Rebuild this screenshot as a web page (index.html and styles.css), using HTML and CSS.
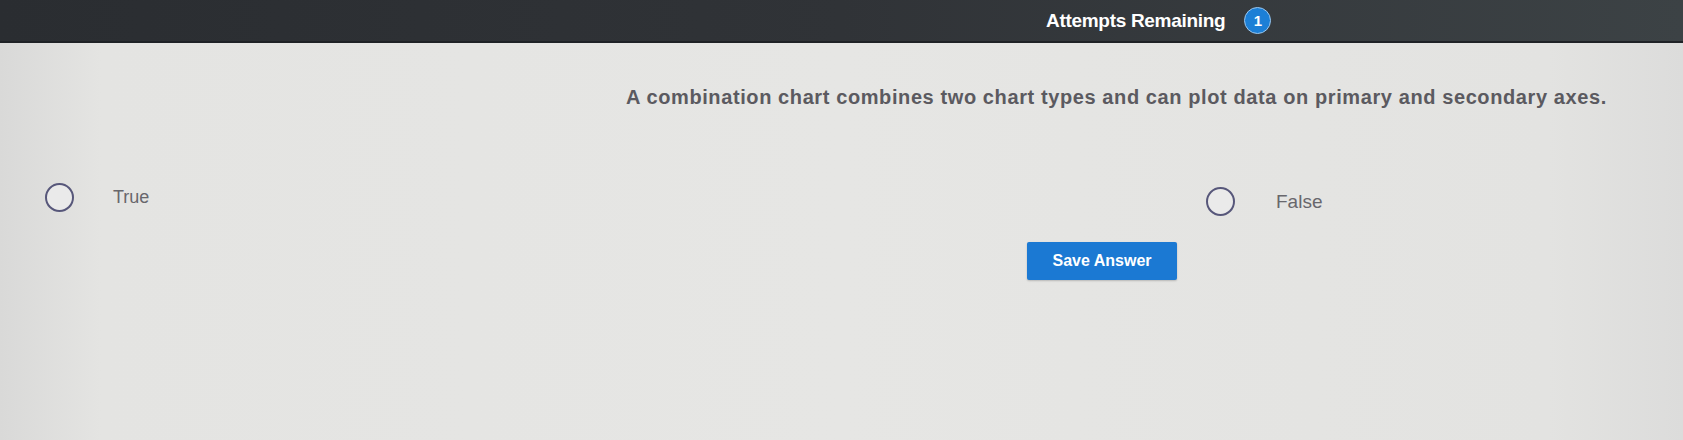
FILE: index.html
```html
<!DOCTYPE html>
<html lang="en">
<head>
  <meta charset="UTF-8" />
  <meta name="viewport" content="width=device-width, initial-scale=1.0"/>
  <title>Question</title>
  <link rel="stylesheet" href="styles.css">
</head>
<body>
  <div class="topbar">
    <span class="attempts">Attempts Remaining</span>
    <span class="badge">1</span>
  </div>
  <div class="question">
    <p>A combination chart combines two chart types and can plot data on primary and secondary axes.</p>
  </div>
  <form class="answers" autocomplete="off">
    <label class="option">
      <span class="radio"></span>
      <span class="option-text">True</span>
    </label>
    <label class="option option-false">
      <span class="radio"></span>
      <span class="option-text">False</span>
    </label>
  </form>
  <div class="actions">
    <button type="button" class="save-btn">Save Answer</button>
  </div>
</body>
</html>
```

FILE: styles.css
```css
body { font-family: 'Liberation Sans', Arial, sans-serif; background: linear-gradient(90deg, #d9d9d8 0%, #e4e4e2 6%, #e6e6e4 50%, #e3e3e1 92%, #dcdcdb 100%); margin: 0; height: 440px; overflow: hidden; }
.topbar { height: 41px; display: flex; align-items: center; gap: 19px; padding-left: 1046px; background: linear-gradient(90deg, #2a2d31 0%, #303337 50%, #3c4245 100%); border-bottom: 2px solid #1f2226; }
.attempts { color: #fff; font-weight: 700; font-size: 19px; letter-spacing: -0.3px; }
.badge { width: 25px; height: 25px; border-radius: 50%; background: #1c7fd6; border: 1px solid #9cc7ee; color: #fff; font-weight: 700; font-size: 15px; display: flex; justify-content: center; align-items: center; }
.question { padding-left: 626px; margin-top: 42px; }
.question p { margin: 0; font-size: 20px; line-height: 24px; font-weight: 700; color: #5b5a60; letter-spacing: 0.6px; }
.answers { display: grid; grid-template-columns: 1161px 1fr; padding-left: 45px; margin-top: 69px; }
.option { display: flex; align-items: center; gap: 39px; color: #68676c; font-size: 18px; }
.option-false { margin-top: 9px; gap: 41px; font-size: 19px; }
.radio { width: 25px; height: 25px; border-radius: 50%; border: 2px solid #57577a; background: #eaeaea; }
.actions { padding-left: 1027px; margin-top: 26px; }
.save-btn { width: 150px; height: 38px; background: #1b79d3; color: #fff; border: none; border-radius: 2px; font-family: 'Liberation Sans', Arial, sans-serif; font-weight: 700; font-size: 16px; box-shadow: 0 1px 2px #0003; cursor: pointer; }
```
